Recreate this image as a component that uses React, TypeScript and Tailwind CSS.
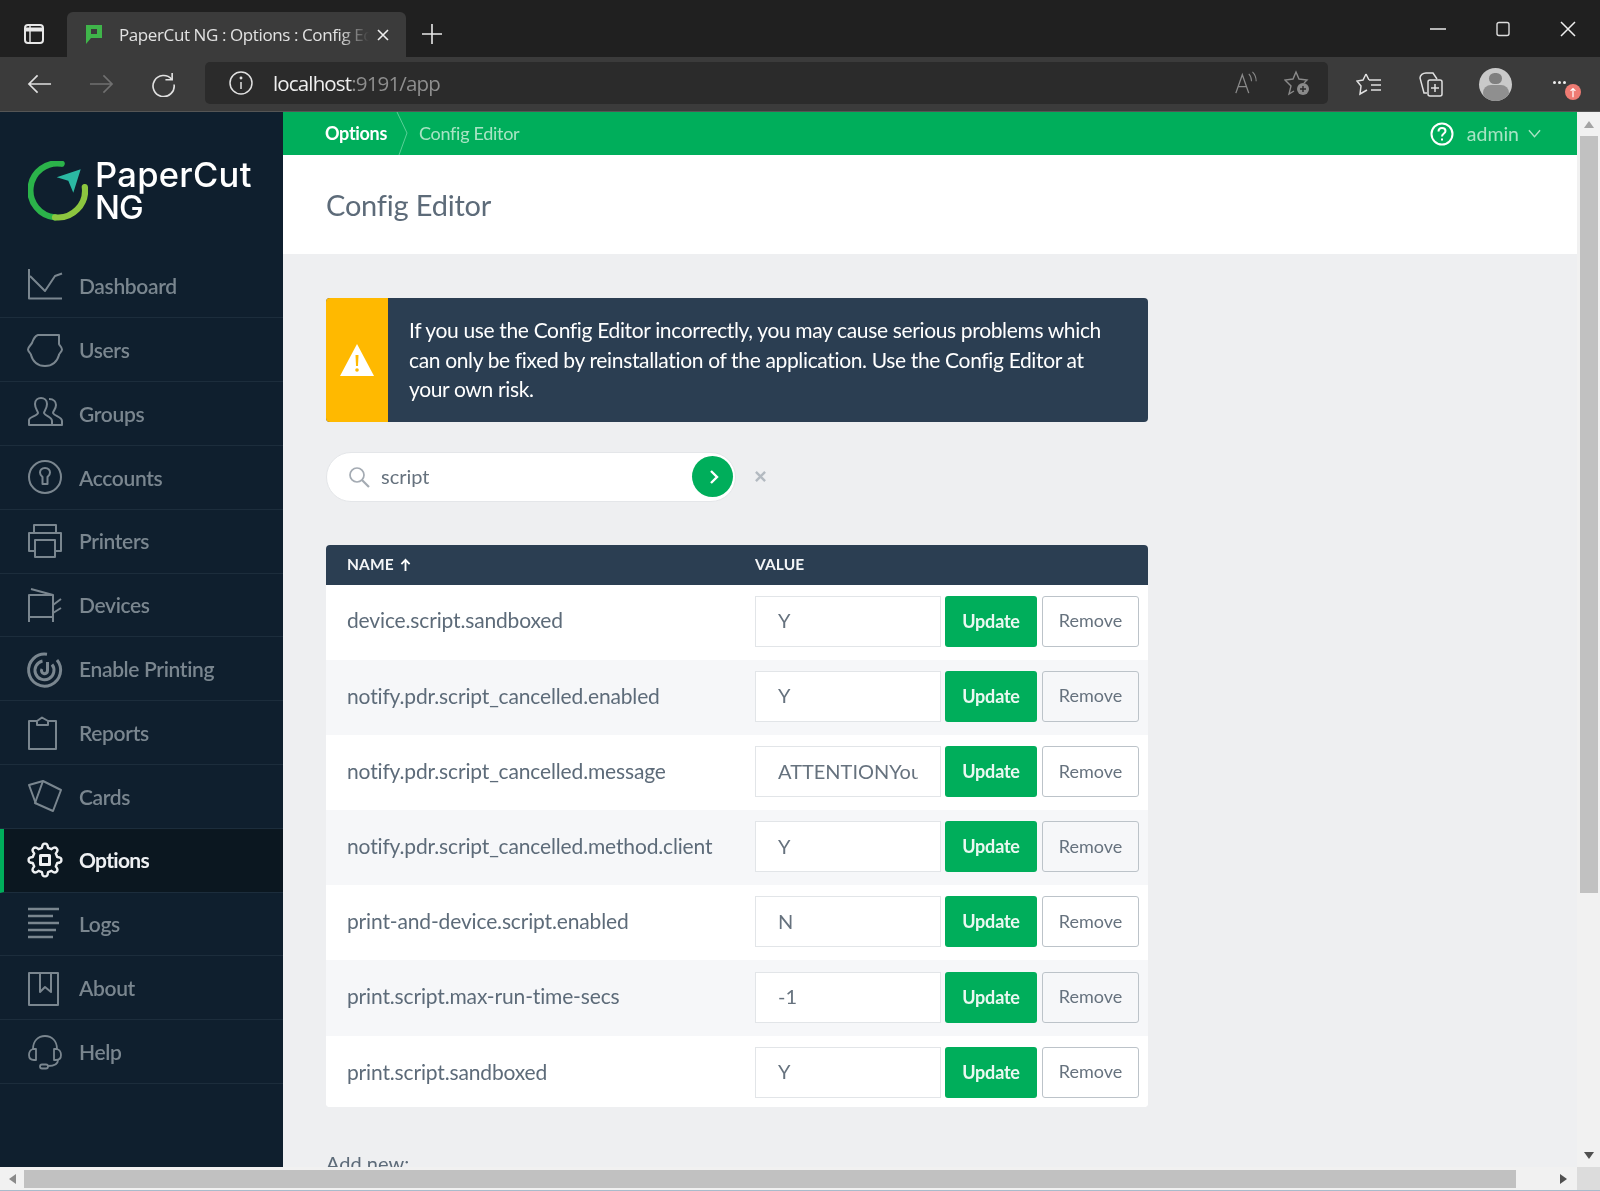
import React from "react";

const I = ({ children, sw = 2 }: { children: React.ReactNode; sw?: number }) => (
  <svg viewBox="0 0 34 34" fill="none" stroke="currentColor" strokeWidth={sw} className="w-[34px] h-[34px] shrink-0 overflow-visible" strokeLinejoin="round">
    {children}
  </svg>
);

function gearPath() {
  const pts: string[] = [];
  const n = 8;
  for (let i = 0; i < n; i++) {
    const a = (i / n) * Math.PI * 2 - Math.PI / 2;
    const d = Math.PI / n;
    const p = (r: number, t: number) => `${(17 + r * Math.cos(t)).toFixed(2)} ${(17 + r * Math.sin(t)).toFixed(2)}`;
    pts.push(`${i === 0 ? "M" : "L"}${p(12.6, a - d * 0.62)}`);
    pts.push(`Q${p(16.8, a - d * 0.42)} ${p(16.4, a)}`);
    pts.push(`Q${p(16.8, a + d * 0.42)} ${p(12.6, a + d * 0.62)}`);
  }
  return pts.join(" ") + "Z";
}

const nav: { label: string; active?: boolean; icon: React.ReactNode }[] = [
  { label: "Dashboard", icon: <I><path d="M1 0V29.500H34" /><path d="M2 7L17 22L27 7L34 4.500" /></I> },
  { label: "Users", icon: <I><path d="M10 2H31V11C31 12 34 14 34 16.500C34 19 31 20 31 22C29 29 24 33 17 33C10 33 5 29 3 22C3 20 0 19 0 16.500C0 14 3 12 4 10C5 7 7 3 10 2Z" /></I> },
  { label: "Groups", icon: <I><path d="M1 28V23C1 20 9 19 10 16C10 14 7 12 7 7C7 3 10 1 13 1C16 1 19 3 19 7C19 12 16 14 16 16C17 19 24 20 24 24V28Z" /><path d="M21 2C26 2 28 5 28 8C28 12 25 14 25 16C26 19 34 20 34 24V28H24" /></I> },
  { label: "Accounts", icon: <I><circle cx="17" cy="17" r="16" /><path d="M17 8C13.500 8 12 10.500 12 12.500C12 15 13.500 16 14.500 17V24H19.500V17C20.500 16 22 15 22 12.500C22 10.500 20.500 8 17 8Z" /></I> },
  { label: "Printers", icon: <I><path d="M6 9V1H28V9" /><path d="M7 27H1V9H33V27H27" /><path d="M7 16H27V33H7Z" /></I> },
  { label: "Devices", icon: <I><path d="M1 34V7H25V34" /><path d="M1 29H25" /><path d="M3 1L25 7" /><path d="M25 17L33 11M25 25L33 20" /></I> },
  { label: "Enable Printing", icon: <I sw={3}><path d="M19 2.300A16 16 0 1 0 29 8" /><path d="M14.500 9A9.500 9.500 0 1 0 24 12.500" /><path d="M19.500 10V18.500A3 3 0 1 1 14 17" /></I> },
  { label: "Reports", icon: <I><path d="M9 5H1V33H28V5H20" /><path d="M9 9V5L14 1.500L20 5V9Z" /></I> },
  { label: "Cards", icon: <I><path d="M8 25L1 6L15 2" /><path d="M15 2L33 11L25 32L7 24Z" /></I> },
  { label: "Options", active: true, icon: <I sw={2.4}><path d={gearPath()} /><rect x="12.500" y="12.500" width="9" height="9" strokeWidth="3" /></I> },
  { label: "Logs", icon: <I sw={2.4}><path d="M0 2H31M0 9H25M0 16H31M0 23H28M0 30H25" /></I> },
  { label: "About", icon: <I><path d="M1 2H30V34H1Z" /><path d="M12 2V21L17 16L23 21V2" /></I> },
  { label: "Help", icon: <I sw={1.8}><path d="M5 14C5 6 10 1 17 1C24 1 29 6 29 14" /><path d="M5 14C2 15 1 18 1 20C1 23 3 25 6 25H8V14Z" /><path d="M29 14C32 15 33 18 33 20C33 23 31 25 28 25H26V14Z" /><path d="M30 25C30 29 27 31 20 31" /><rect x="12" y="29.500" width="8" height="4" rx="2" /></I> },
];

const rows = [
  ["device.script.sandboxed", "Y"],
  ["notify.pdr.script_cancelled.enabled", "Y"],
  ["notify.pdr.script_cancelled.message", "ATTENTIONYour print job has been cancelled"],
  ["notify.pdr.script_cancelled.method.client", "Y"],
  ["print-and-device.script.enabled", "N"],
  ["print.script.max-run-time-secs", "-1"],
  ["print.script.sandboxed", "Y"],
];

export default function App() {
  return (
    <div className="w-[1600px] h-[1191px] overflow-hidden flex flex-col bg-[#eeeff1] font-['Lato',sans-serif] blur-[0.6px]">
      {/* tab strip */}
      <div className="h-[57px] bg-[#202020] flex items-end shrink-0">
        <div className="w-[67px] h-[45px] flex items-center justify-center">
          <svg viewBox="0 0 22 22" className="w-[22px] h-[22px] mb-[2px]" fill="none" stroke="#e8e8e8" strokeWidth="2"><rect x="2" y="2" width="18" height="18" rx="3" /><path d="M7 3V20" strokeWidth="1.400" /><path d="M2 6.500H20" strokeWidth="4" /></svg>
        </div>
        <div className="w-[339px] h-[45px] bg-[#3b3b3b] rounded-t-[6px] flex items-center pl-[18px] text-[#e2e2e2]">
          <svg viewBox="0 0 18 22" className="w-[18px] h-[22px] shrink-0"><path d="M1 1H17V14H6L1 20Z" fill="#3fb54a" /><rect x="6" y="5" width="6" height="5" fill="#3b3b3b" /></svg>
          <div className="ml-[16px] w-[250px] overflow-hidden whitespace-nowrap text-[17px] tracking-[-0.400px] font-['Open_Sans',sans-serif] [mask-image:linear-gradient(to_right,black_88%,transparent)]">PaperCut NG : Options : Config Editor</div>
          <svg viewBox="0 0 14 14" className="w-[14px] h-[14px] ml-[7px] shrink-0" stroke="#eee" strokeWidth="1.600"><path d="M2 2L12 12M12 2L2 12" /></svg>
        </div>
        <div className="h-[45px] flex items-center ml-[16px]">
          <svg viewBox="0 0 20 20" className="w-[20px] h-[20px] mb-[2px]" stroke="#e8e8e8" strokeWidth="1.600"><path d="M10 0V20M0 10H20" /></svg>
        </div>
        <div className="flex-1" />
        <div className="self-stretch flex items-center">
          <div className="w-[65px] flex justify-center"><svg viewBox="0 0 16 16" className="w-[16px] h-[16px]" stroke="#ddd" strokeWidth="1.600"><path d="M0 8H16" /></svg></div>
          <div className="w-[65px] flex justify-center"><svg viewBox="0 0 16 16" className="w-[16px] h-[16px]" fill="none" stroke="#ddd" strokeWidth="1.400"><rect x="2" y="1.500" width="12" height="13" rx="2" /></svg></div>
          <div className="w-[65px] flex justify-center"><svg viewBox="0 0 16 16" className="w-[16px] h-[16px]" stroke="#eee" strokeWidth="1.500"><path d="M1 1L15 15M15 1L1 15" /></svg></div>
        </div>
      </div>
      {/* toolbar */}
      <div className="h-[55px] bg-[#3b3b3b] border-b border-[#555] flex items-center shrink-0 relative">
        <div className="w-[205px] flex items-center pl-[27px] gap-[37px]">
          <svg viewBox="0 0 26 24" className="w-[25px] h-[24px] shrink-0" fill="none" stroke="#e0e0e0" strokeWidth="1.700"><path d="M25 12H2M11 3L2 12L11 21" /></svg>
          <svg viewBox="0 0 26 24" className="w-[25px] h-[24px] shrink-0" fill="none" stroke="#707070" strokeWidth="1.700"><path d="M1 12H24M15 3L24 12L15 21" /></svg>
          <svg viewBox="0 0 26 26" className="w-[25px] h-[25px] shrink-0" fill="none" stroke="#e0e0e0" strokeWidth="1.700"><path d="M21.500 7.500A11 11 0 1 0 24 13" /><path d="M22 1V8H15" /></svg>
        </div>
        <div className="w-[1123px] h-[42px] mb-[2px] bg-[#2b2b2b] rounded-[5px] flex items-center pl-[24px] pr-[8px]">
          <svg viewBox="0 0 24 24" className="w-[24px] h-[24px] shrink-0" fill="none" stroke="#e0e0e0" strokeWidth="1.500"><circle cx="12" cy="12" r="11" /><path d="M12 11V18" /><circle cx="12" cy="7" r="0.700" /></svg>
          <div className="ml-[20px] mt-[1px] text-[20.500px] text-[#8e8e8e] font-['Open_Sans',sans-serif] tracking-[-0.850px]"><span className="text-[#efefef]">localhost</span>:9191/app</div>
          <div className="flex-1" />
          <svg viewBox="0 0 26 26" className="w-[24px] h-[24px]" fill="none" stroke="#8a8a8a" strokeWidth="1.400"><path d="M2 24L9 4L16 24M4.500 17H13.500" /><path d="M16 3C18 5 19 8 19 11M20 1C23 4 24 8 24 11" strokeWidth="1.100" /></svg>
          <svg viewBox="0 0 26 26" className="w-[26px] h-[26px] ml-[26px] mr-[10px]" fill="none" stroke="#8a8a8a" strokeWidth="1.400"><path d="M10 21L5 24L7 16L1 10L9 9L12 2L15 9L23 10L20 13" /><circle cx="19" cy="19" r="6" fill="#8a8a8a" stroke="none" /><path d="M19 16V22M16 19H22" stroke="#2b2b2b" /></svg>
        </div>
        <svg viewBox="0 0 26 26" className="w-[26px] h-[26px] ml-[28px] shrink-0" fill="none" stroke="#e0e0e0" strokeWidth="1.500"><path d="M10 3L13 9M10 3L7 9L1 10L5 15L4 23L11 19" /><path d="M13 9H25M15 14H25M15 19H25" /></svg>
        <svg viewBox="0 0 26 26" className="w-[26px] h-[26px] ml-[36px] shrink-0" fill="none" stroke="#e0e0e0" strokeWidth="1.500"><path d="M9 22H6L2 7C2 4 5 2 8 2H15L19 8" /><rect x="10" y="9" width="14" height="16" rx="2" /><path d="M17 13V21M13 17H21" /></svg>
        <div className="w-[33px] h-[33px] rounded-full bg-[#c9c9c9] ml-[35px] shrink-0 overflow-hidden flex flex-col items-center pt-[5px]">
          <div className="w-[13px] h-[15px] rounded-full bg-[#7f7f7f]" />
          <div className="w-[26px] h-[20px] rounded-full bg-[#8f8f8f] mt-[1px]" />
        </div>
        <div className="flex gap-[2px] ml-[41px] mb-[3px] shrink-0">
          <div className="w-[3px] h-[3px] rounded-full bg-[#eee]" /><div className="w-[3px] h-[3px] rounded-full bg-[#eee]" /><div className="w-[3px] h-[3px] rounded-full bg-[#eee]" />
        </div>
        <div className="absolute left-[1565px] top-[27px] w-[16px] h-[16px] rounded-full bg-[#ee7b73] flex items-center justify-center">
          <svg viewBox="0 0 10 12" className="w-[8px] h-[11px]" fill="none" stroke="#fff" strokeWidth="1.500"><path d="M5 12V1M2 4L5 1L8 4" /></svg>
        </div>
      </div>
      {/* page */}
      <div className="h-[1055px] flex shrink-0 min-h-0">
        <aside className="w-[283px] shrink-0 bg-[#0f1f2e] overflow-hidden">
          <div className="h-[142.600px] flex pl-[28px] pt-[49px]">
            <svg viewBox="0 0 60 60" className="w-[60px] h-[60px] shrink-0">
              <path d="M33.700 2.750A27 27 0 1 0 27 56.300" fill="none" stroke="#2bb34a" strokeWidth="6.200" strokeLinecap="round" />
              <path d="M27 56.300A27 27 0 0 0 56.800 26" fill="none" stroke="#8cc63f" strokeWidth="6.200" strokeLinecap="round" />
              <path d="M28.700 16.300L52.700 8.300L45.300 31.700L40.300 19.700Z" fill="#2bb8a3" />
            </svg>
            <div className="ml-[7px] -mt-[2px] text-white font-['Inter',sans-serif] font-medium">
              <div className="text-[34.500px] leading-[32px] tracking-[0.300px] whitespace-nowrap">PaperCut</div>
              <div className="text-[33px] leading-[32px] tracking-[-1px]">NG</div>
            </div>
          </div>
          {nav.map((n) => (
            <div
              key={n.label}
              className={
                n.active
                  ? "h-[63.800px] flex items-center pl-[24px] border-l-[4px] border-b border-b-[#1c2d3c] border-l-[#00ae5b] bg-[#0b1720] text-[#eef0f2]"
                  : "h-[63.800px] flex items-center pl-[28px] border-b border-[#1c2d3c] text-[#7a868f]"
              }
            >
              {n.icon}
              <span className={n.active ? "ml-[17px] text-[21px] font-bold tracking-[-0.700px]" : "ml-[17px] text-[21px] font-semibold tracking-[-0.350px]"}>{n.label}</span>
            </div>
          ))}
        </aside>
        <main className="flex-1 min-w-0 overflow-hidden flex flex-col">
          <div className="h-[43px] shrink-0 bg-[#00ae5b] flex items-center pl-[42px] text-white">
            <span className="font-bold text-[18px] tracking-[-0.300px]">Options</span>
            <svg viewBox="0 0 14 43" className="w-[14px] h-[43px] ml-[9px]" fill="none" stroke="#59cf97" strokeWidth="1"><path d="M1 0L11 21L3 43" /></svg>
            <span className="ml-[9px] text-[18px] text-[#a8e4c4] tracking-[-0.300px]">Config Editor</span>
            <div className="flex-1" />
            <svg viewBox="0 0 24 24" className="w-[24px] h-[24px]" fill="none" stroke="#fff" strokeWidth="2"><circle cx="12" cy="12" r="10.500" /><path d="M8.500 9.500C8.500 7 10 6 12 6C14 6 15.500 7.300 15.500 9C15.500 11.500 12 11.500 12 14.500" /><path d="M12 16.500V18.500" /></svg>
            <span className="ml-[13px] text-[19.500px] text-[#a8e4c4]">admin</span>
            <svg viewBox="0 0 14 9" className="w-[13px] h-[9px] ml-[9px] mr-[36px]" fill="none" stroke="#a8e4c4" strokeWidth="1.500"><path d="M1 1L7 8L13 1" /></svg>
          </div>
          <div className="h-[99px] shrink-0 bg-white flex items-center pl-[43px] pt-[1px]">
            <h1 className="text-[29px] text-[#5d6b79] tracking-[-0.200px]">Config Editor</h1>
          </div>
          <div className="pl-[43px] pt-[44px]">
            <div className="w-[822px] h-[123.500px] flex rounded-[4px] overflow-hidden bg-[#2b3e52]">
              <div className="w-[62px] shrink-0 bg-[#ffb900] flex items-center justify-center">
                <svg viewBox="0 0 34 32" className="w-[34px] h-[32px] shrink-0"><path d="M17 0L34 32H0Z" fill="#fff" /><path d="M15.500 11H18.500L18 22H16Z" fill="#ffb900" /><circle cx="17" cy="26" r="1.800" fill="#ffb900" /></svg>
              </div>
              <div className="pl-[21px] pt-[17px] pr-[30px] text-[21px] leading-[29.500px] text-white tracking-[-0.350px]">
                If you use the Config Editor incorrectly, you may cause serious problems which can only be fixed by reinstallation of the application. Use the Config Editor at your own risk.
              </div>
            </div>
            <div className="flex items-center mt-[30px]">
              <div className="w-[410px] h-[50px] bg-white rounded-full border border-[#e4e6e9] flex items-center pl-[21px] pr-[2px]">
                <svg viewBox="0 0 22 22" className="w-[22px] h-[22px]" fill="none" stroke="#a4abb3" strokeWidth="1.700"><circle cx="9" cy="9" r="7" /><path d="M14 14L21 21" strokeWidth="2.200" /></svg>
                <span className="ml-[11px] text-[20px] text-[#66727e] -mt-[1px]">script</span>
                <div className="flex-1" />
                <div className="w-[41px] h-[41px] rounded-full bg-[#00ae5b] flex items-center justify-center">
                  <svg viewBox="0 0 10 14" className="w-[10px] h-[14px] ml-[2px]" fill="none" stroke="#fff" strokeWidth="2.400"><path d="M2 1L8 7L2 13" /></svg>
                </div>
              </div>
              <svg viewBox="0 0 12 12" className="w-[11px] h-[11px] ml-[19px]" stroke="#b3bac1" strokeWidth="2.600"><path d="M1 1L11 11M11 1L1 11" /></svg>
            </div>
            <div className="w-[822px] mt-[43px] rounded-[4px] overflow-hidden bg-white">
              <div className="h-[40px] bg-[#2b3e52] flex items-center text-[#f2f4f6] text-[15.500px] font-bold tracking-[0.100px]">
                <div className="w-[429px] pl-[21px] flex items-center">
                  NAME
                  <svg viewBox="0 0 12 14" className="w-[11px] h-[13px] ml-[6px]" fill="none" stroke="#fff" strokeWidth="2"><path d="M6 14V2M1.500 6.500L6 2L10.500 6.500" /></svg>
                </div>
                <div>VALUE</div>
              </div>
              {rows.map(([name, value], i) => (
                <div key={name} className={(i % 2 === 1 ? "h-[75.200px] bg-[#f6f7f9]" : i === 6 ? "h-[71.800px] bg-white" : "h-[75.200px] bg-white") + " pt-[11.200px]"}>
                  <div className="h-[51px] flex items-center">
                    <div className="w-[429px] pl-[21px] pb-[2px] text-[21px] text-[#5d6b79] tracking-[-0.150px] whitespace-nowrap">{name}</div>
                    <input
                      readOnly
                      value={value}
                      className="w-[186px] h-[51px] bg-white border border-[#e2e5e8] pl-[22px] pr-[22px] pb-[2px] text-[20px] text-[#66727e] outline-none font-['Lato',sans-serif]"
                    />
                    <div className="ml-[4px] w-[92px] h-[51px] rounded-[3px] bg-[#00ae5b] text-[#eaf8f1] text-[18px] font-bold flex items-center justify-center tracking-[-0.200px]">Update</div>
                    <div className="ml-[5px] w-[97px] h-[51px] pb-[1px] rounded-[3px] border border-[#bcc3c9] text-[#66727e] text-[18px] flex items-center justify-center">Remove</div>
                  </div>
                </div>
              ))}
            </div>
            <div className="mt-[41px] text-[20px] text-[#5d6b79]">Add new:</div>
          </div>
        </main>
        <div className="w-[23px] shrink-0 bg-[#f1f1f1] flex flex-col items-center">
          <div className="h-[24px] w-full flex items-center justify-center">
            <svg viewBox="0 0 10 7" className="w-[10px] h-[7px]"><path d="M5 0L10 7H0Z" fill="#a3a3a3" /></svg>
          </div>
          <div className="w-[18px] h-[757px] bg-[#c1c1c1]" />
          <div className="flex-1" />
          <div className="h-[24px] w-full flex items-center justify-center">
            <svg viewBox="0 0 10 7" className="w-[10px] h-[7px]"><path d="M0 0H10L5 7Z" fill="#505050" /></svg>
          </div>
        </div>
      </div>
      {/* horizontal scrollbar */}
      <div className="h-[23px] shrink-0 bg-[#f1f1f1] flex items-center">
        <div className="w-[24px] flex justify-center">
          <svg viewBox="0 0 7 10" className="w-[7px] h-[10px]"><path d="M7 0V10L0 5Z" fill="#8a8a8a" /></svg>
        </div>
        <div className="w-[1492px] h-[18px] bg-[#c1c1c1]" />
        <div className="flex-1 flex justify-end pr-[10px]">
          <svg viewBox="0 0 7 10" className="w-[7px] h-[10px]"><path d="M0 0V10L7 5Z" fill="#505050" /></svg>
        </div>
        <div className="w-[23px] h-full bg-[#dcdcdc]" />
      </div>
      <div className="h-[1px] bg-[#a9bbcb] shrink-0" />
    </div>
  );
}
